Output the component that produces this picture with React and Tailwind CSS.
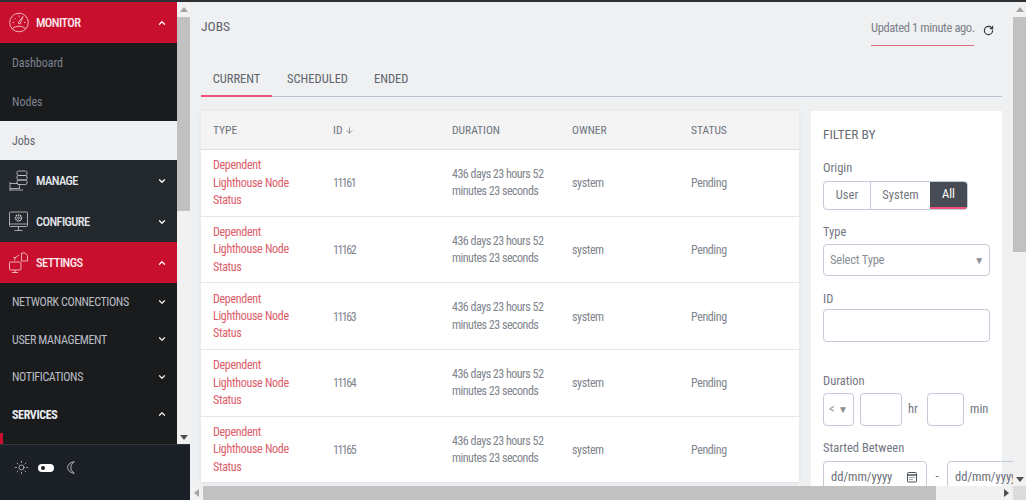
import React from "react";
import { ChevronUp, ChevronDown, ArrowDown, RotateCw, Sun } from "lucide-react";

function GaugeIcon() {
  return (
    <svg width="20" height="21" viewBox="0 0 20 21" fill="none" stroke="currentColor" strokeWidth="0.8">
      <circle cx="10" cy="10.500" r="9.300" />
      <path d="M3.500 16.500c2-1.600 4-2.200 6.500-2.200s4.500.6 6.500 2.200" />
      <path d="M9 11 14 4.500 11 12z" />
      <path d="M3.500 10.500H5M5.500 6l1 1M10 3.500V5M16.500 10.500H15" />
    </svg>
  );
}
function ManageIcon() {
  return (
    <svg width="19" height="22" viewBox="0 0 19 22" fill="none" stroke="currentColor" strokeWidth="0.8">
      <rect x="8" y="1" width="10" height="4.500" rx="1.500" />
      <rect x="8" y="5.500" width="10" height="4.500" rx="1.500" />
      <rect x="8" y="10" width="10" height="4.500" rx="1.500" />
      <path d="M1 12v9M1 13.500h7.500l2 2v3H1M1 20h13" />
    </svg>
  );
}
function ConfigureIcon() {
  return (
    <svg width="19" height="21" viewBox="0 0 19 21" fill="none" stroke="currentColor" strokeWidth="0.8">
      <rect x=".5" y="1" width="18" height="14.500" rx="1" />
      <path d="M.5 13h18M9.500 15.500V19M5.500 19.500h8" />
      <circle cx="9.500" cy="7" r="3" strokeDasharray="1.500 0.700" strokeWidth="1.400" />
      <circle cx="9.500" cy="7" r="1" />
    </svg>
  );
}
function SettingsIcon() {
  return (
    <svg width="19" height="21" viewBox="0 0 19 21" fill="none" stroke="currentColor" strokeWidth="0.8">
      <rect x=".5" y="10" width="11.500" height="8" rx="1" />
      <path d="M6 18v2.500M3 20.500h6" />
      <path d="M12.500 1H16l2.500 2.500V9h-6z" />
      <path d="M10 3 6.500 5.500 5.500 8.500M4.500 5.500 6.500 5.500" />
    </svg>
  );
}
function Crescent() {
  return (
    <svg width="8" height="13" viewBox="0 0 8 13" fill="none" stroke="currentColor" strokeWidth="0.9">
      <path d="M7.300.7C2.500 1.500.7 4 .7 6.500s1.800 5 6.600 5.800C4.800 10.500 3.800 8.700 3.800 6.500S4.800 2.500 7.300.7z" />
    </svg>
  );
}
function CalendarIcon() {
  return (
    <svg width="11" height="11" viewBox="0 0 11 11" fill="none" stroke="#4b5159" strokeWidth="1">
      <rect x=".5" y=".5" width="9" height="9.500" rx="1" />
      <path d="M.5 3h9" strokeWidth="1.500" />
      <path d="M2.500 5.500h1M4.500 5.500h1M6.500 5.500h1M2.500 7.500h1M4.500 7.500h1" />
    </svg>
  );
}

function Head({ icon, label, open, red }) {
  return (
    <div className={`flex h-[41px] shrink-0 items-center pl-[9px] pr-[10px] ${red ? "bg-[#c8102e] text-[#f7d5db]" : "bg-[#23282d] text-[#c9ccd0]"}`}>
      <span className="flex w-[27px] shrink-0 items-center">{icon}</span>
      <span className={`flex-1 pt-[1px] text-[12.500px] font-medium tracking-[-0.6px] ${red ? "text-[#fde8ec]" : "text-[#e3e6ea]"}`}>{label}</span>
      {open ? <ChevronUp size={10} strokeWidth={3} className="text-white" /> : <ChevronDown size={10} strokeWidth={3} className="text-white" />}
    </div>
  );
}

function SubHead({ label, open, bold }) {
  return (
    <div className="flex h-[37.500px] shrink-0 items-center pl-3 pr-[10px]">
      <span className={`flex-1 pt-[1px] text-[12px] tracking-[-0.35px] ${bold ? "font-bold text-[#eceef1]" : "text-[#b9bdc4]"}`}>{label}</span>
      {open ? <ChevronUp size={10} strokeWidth={3} className="text-[#e8e8e8]" /> : <ChevronDown size={10} strokeWidth={3} className="text-[#e8e8e8]" />}
    </div>
  );
}

function Row({ id }) {
  return (
    <div className="grid h-[66.700px] grid-cols-[120px_119px_120px_119px_1fr] items-center border-b border-[#e4e5ee] pt-[1px] text-[12px] tracking-[-0.4px] text-[#80858e]">
      <div className="pl-3 pr-6 leading-[17.400px] tracking-[-0.3px] text-[#dc5c68]">Dependent Lighthouse Node Status</div>
      <div className="pl-3 tracking-[-1.500px]">{id}</div>
      <div className="pl-3 leading-[17.400px] tracking-[-0.5px]">436 days 23 hours 52 minutes 23 seconds</div>
      <div className="pl-3">system</div>
      <div className="pl-3">Pending</div>
    </div>
  );
}

function Label({ children, className = "" }) {
  return <div className={`text-[12.500px] text-[#73777f] ${className}`}>{children}</div>;
}

function ScrollArrow({ dir }) {
  const cls = {
    up: "border-x-[4px] border-b-[5px] border-x-transparent border-b-[#a3a3a3]",
    down: "border-x-[4px] border-t-[5px] border-x-transparent border-t-[#505050]",
    left: "border-y-[4px] border-r-[5px] border-y-transparent border-r-[#a3a3a3]",
    right: "border-y-[4px] border-l-[5px] border-y-transparent border-l-[#505050]",
  }[dir];
  return <div className={`h-0 w-0 ${cls}`} />;
}

export default function App() {
  const navItem = "flex h-[39px] shrink-0 items-center pl-3 pt-[1px] text-[12px] ";
  return (
    <div className="flex h-[500px] w-[1026px] flex-col overflow-hidden bg-[#eff0f2] font-['Roboto',sans-serif] [font-stretch:85%]">
      <div className="h-[2px] shrink-0 bg-[#2b3035]" />
      <div className="flex min-h-0 flex-1">
        {/* sidebar */}
        <div className="flex h-full w-[190px] shrink-0 flex-col">
          <div className="flex min-h-0 flex-1">
            <div className="flex w-[177px] shrink-0 flex-col overflow-hidden bg-[#191b1d]">
              <Head red open label="MONITOR" icon={<GaugeIcon />} />
              <div className={navItem + "text-[#7d8490]"}>Dashboard</div>
              <div className={navItem + "text-[#7d8490]"}>Nodes</div>
              <div className={navItem + "bg-[#eff0f2] text-[#5f6570]"}>Jobs</div>
              <Head label="MANAGE" icon={<ManageIcon />} />
              <Head label="CONFIGURE" icon={<ConfigureIcon />} />
              <Head red open label="SETTINGS" icon={<SettingsIcon />} />
              <SubHead label="NETWORK CONNECTIONS" />
              <SubHead label="USER MANAGEMENT" />
              <SubHead label="NOTIFICATIONS" />
              <SubHead bold open label="SERVICES" />
              <div className="h-[11px] w-[3px] bg-[#c8102e]" />
            </div>
            <div className="flex w-[13px] shrink-0 flex-col items-center bg-[#f1f1f1]">
              <div className="flex h-[15px] items-center"><ScrollArrow dir="up" /></div>
              <div className="h-[194px] w-full bg-[#c1c1c1]" />
              <div className="flex-1" />
              <div className="flex h-[13px] items-center"><ScrollArrow dir="down" /></div>
            </div>
          </div>
          <div className="flex h-[56px] shrink-0 items-center border-t border-[#33383e] bg-[#1a2026] pb-[10px] pl-[14px] text-[#c9ccd0]">
            <Sun size={15} strokeWidth={1.200} />
            <div className="ml-[9px] flex h-[8px] w-[16px] items-center rounded-full bg-white pl-[3px]">
              <div className="h-[4px] w-[4px] rounded-full bg-[#1a2026]" />
            </div>
            <div className="ml-[13px] flex"><Crescent /></div>
          </div>
        </div>

        {/* main + scrollbars */}
        <div className="flex min-w-0 flex-1 flex-col">
          <div className="flex min-h-0 flex-1">
            <div className="min-w-0 flex-1 overflow-hidden pl-[11px]">
              <div className="w-[900px]">
                <div className="flex h-[66px] w-[801px]">
                  <div className="flex-1 pt-[14px] text-[13.500px] text-[#5e636b]">JOBS</div>
                  <div className="mt-[17px] h-[27px] w-[103px] whitespace-nowrap border-b border-[#d87080] text-[12.500px] tracking-[-0.38px] text-[#7b808a]">Updated 1 minute ago.</div>
                  <div className="ml-[9px] w-[19px] pt-[23px] text-[#33383e]"><RotateCw size={11} strokeWidth={2.500} /></div>
                </div>
                <div className="flex h-[29px] w-[801px] items-start border-b border-[#bcc2d0] pt-[2px] text-[12.500px] text-[#5f646c]">
                  <div className="-mt-[2px] flex h-[29px] w-[71px] justify-center border-b-2 border-[#f0507a] pt-[2px]">CURRENT</div>
                  <div className="ml-[15px]">SCHEDULED</div>
                  <div className="ml-[26px]">ENDED</div>
                </div>
                <div className="mt-[14px] flex items-start gap-3">
                  <div className="w-[598px] bg-white shadow-[0_0_4px_rgba(0,0,0,0.06)]">
                    <div className="grid h-[39px] grid-cols-[120px_119px_120px_119px_1fr] items-center border-b border-[#dcdde6] bg-[#f4f4f5] pt-[1px] text-[11.500px] text-[#6d737c]">
                      <div className="pl-3">TYPE</div>
                      <div className="flex items-center gap-[3px] pl-3">ID <ArrowDown size={9} strokeWidth={2} /></div>
                      <div className="pl-3">DURATION</div>
                      <div className="pl-3">OWNER</div>
                      <div className="pl-3">STATUS</div>
                    </div>
                    <Row id="11161" />
                    <Row id="11162" />
                    <Row id="11163" />
                    <Row id="11164" />
                    <Row id="11165" />
                  </div>
                  <div className="h-[420px] w-[191px] bg-white px-3 pt-[13px]">
                    <div className="text-[13.500px] text-[#6a6f78]">FILTER BY</div>
                    <Label className="mt-[15px]">Origin</Label>
                    <div className="mt-[3px] flex h-[29px] w-[145px] overflow-hidden rounded-[4px] border border-[#c5cad8] text-[12.500px] text-[#73777f]">
                      <div className="flex w-[47px] items-center justify-center border-r border-[#c5cad8]">User</div>
                      <div className="flex w-[59px] items-center justify-center">System</div>
                      <div className="flex flex-1 items-center justify-center border-b-2 border-[#f0507a] bg-[#474c54] text-white">All</div>
                    </div>
                    <Label className="mt-[13px]">Type</Label>
                    <div className="mt-[2px] flex h-[32px] w-[167px] items-center justify-between rounded-[4px] border border-[#c5cad8] pl-[6px] pr-[5px] pt-[1px] text-[12.500px] tracking-[-0.2px] text-[#8a8e96]">
                      Select Type <span className="text-[10px] text-[#8a8e96]">▼</span>
                    </div>
                    <Label className="mt-[14px]">ID</Label>
                    <div className="h-[33px] w-[167px] rounded-[4px] border border-[#c5cad8]" />
                    <Label className="mt-[30px]">Duration</Label>
                    <div className="mt-[3px] flex items-center text-[12.500px] text-[#73777f]">
                      <div className="flex h-[33px] w-[31px] items-center justify-between rounded-[4px] border border-[#c5cad8] px-[5px] text-[#8a8e96]">&lt;<span className="text-[10px]">▼</span></div>
                      <div className="ml-[6px] h-[33px] w-[42px] rounded-[4px] border border-[#c5cad8]" />
                      <span className="ml-[6px] w-[19px]">hr</span>
                      <div className="h-[33px] w-[37px] rounded-[4px] border border-[#c5cad8]" />
                      <span className="ml-[6px]">min</span>
                    </div>
                    <Label className="mt-[13px]">Started Between</Label>
                    <div className="mt-[3px] flex items-start text-[12.500px] text-[#6a6f78]">
                      <div className="flex h-[33px] w-[104px] shrink-0 items-center justify-between rounded-[4px] border border-[#c5cad8] pl-[7px] pr-[8px]">dd/mm/yyyy <CalendarIcon /></div>
                      <span className="w-[20px] shrink-0 pt-[6px] text-center">-</span>
                      <div className="flex h-[33px] w-[100px] shrink-0 items-center rounded-[4px] border border-[#c5cad8] px-[7px]">dd/mm/yyyy</div>
                    </div>
                  </div>
                </div>
              </div>
            </div>
            <div className="flex w-[13px] shrink-0 flex-col items-center bg-[#f1f1f1]">
              <div className="flex h-[15px] items-center"><ScrollArrow dir="up" /></div>
              <div className="h-[235px] w-full bg-[#c1c1c1]" />
              <div className="flex-1" />
              <div className="flex h-[13px] items-center"><ScrollArrow dir="down" /></div>
            </div>
          </div>
          <div className="flex h-[14px] shrink-0 items-center bg-[#f1f1f1]">
            <div className="flex w-[13px] justify-center"><ScrollArrow dir="left" /></div>
            <div className="h-full w-[733px] bg-[#c1c1c1]" />
            <div className="flex-1" />
            <div className="flex w-[13px] justify-center"><ScrollArrow dir="right" /></div>
            <div className="h-full w-[13px] bg-[#dcdcdc]" />
          </div>
        </div>
      </div>
    </div>
  );
}
